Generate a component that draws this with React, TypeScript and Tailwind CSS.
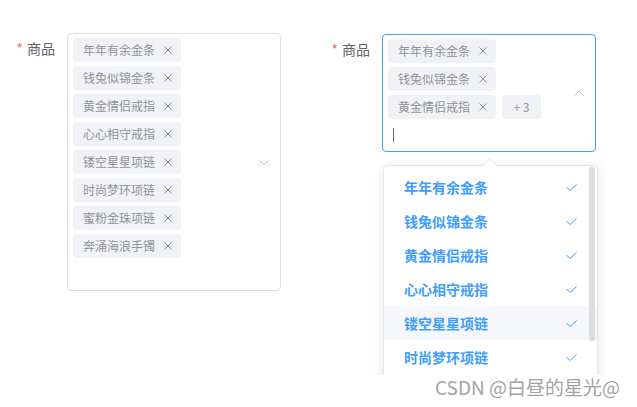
import React from 'react';

const goods = ['年年有余金条', '钱兔似锦金条', '黄金情侣戒指', '心心相守戒指', '镂空星星项链', '时尚梦环项链', '蜜粉金珠项链', '奔涌海浪手镯'];

function CloseIcon() {
  return (
    <svg className="ml-[9px] shrink-0" width="8" height="8" viewBox="0 0 8 8">
      <path d="M0.5 0.5L7.5 7.5M7.5 0.5L0.5 7.5" stroke="#909399" strokeWidth="1" fill="none" />
    </svg>
  );
}

function Tag({ label }: { label: string }) {
  return (
    <span className="flex h-[24px] items-center rounded-[4px] bg-[#f0f2f5] pl-[10px] pr-[9px] text-[12px] leading-none text-[#909399]">
      {label}
      <CloseIcon />
    </span>
  );
}

function Chevron({ up }: { up?: boolean }) {
  return (
    <svg width="12" height="7" viewBox="0 0 12 7" className={up ? 'rotate-180' : ''}>
      <path d="M1 1L6 6L11 1" stroke="#c0c4cc" strokeWidth="1" fill="none" />
    </svg>
  );
}

function Label() {
  return (
    <div className="w-[67px] shrink-0 pr-[12px] text-right text-[14px] leading-[31px] text-[#606266]">
      <span className="mr-[4px] text-[#f56c6c]">*</span>商品
    </div>
  );
}

function Dropdown() {
  return (
    <div className="absolute left-[-11px] top-[calc(100%+7px)] h-[216px] w-[250px] overflow-hidden pl-[12px]">
      <div className="relative mt-[6px] w-[215px] rounded-[4px] border border-[#e4e7ed] bg-white shadow-[0_2px_12px_0_rgba(0,0,0,0.1)]">
        <svg className="absolute left-[99px] top-[-8px]" width="14" height="8" viewBox="0 0 14 8">
          <path d="M0 8L7 1L14 8" stroke="#e4e7ed" strokeWidth="1" fill="white" />
        </svg>
        <div className="absolute right-[2px] top-px h-[174px] w-[6px] rounded-full bg-[#dcdde0]" />
        <ul className="pb-[6px] pt-[4px]">
          {goods.map((g, i) => (
            <li
              key={g}
              className={`flex h-[34px] items-center justify-between pl-[20px] pr-[20px] text-[14px] font-bold text-[#409eff] ${i === 4 ? 'bg-[#f5f7fa]' : ''}`}
            >
              {g}
              <svg width="11" height="7" viewBox="0 0 11 7">
                <path d="M0.5 3L4 6.5L10.5 0.5" stroke="#409eff" strokeWidth="1" fill="none" />
              </svg>
            </li>
          ))}
        </ul>
      </div>
    </div>
  );
}

export default function App() {
  return (
    <div className="relative h-[407px] w-[637px] overflow-hidden bg-white font-['Noto_Sans_CJK_SC',sans-serif]">
      <div className="flex items-start pt-[33px]">
        <div className="flex items-start">
          <Label />
          <div className="flex h-[258px] w-[214px] rounded-[4px] border border-[#dcdfe6]">
            <div className="flex flex-1 flex-wrap content-start gap-x-[6px] gap-y-[4px] pl-[5px] pt-[4px]">
              {goods.map((g) => (
                <Tag key={g} label={g} />
              ))}
            </div>
            <div className="flex w-[32px] items-center justify-center">
              <Chevron />
            </div>
          </div>
        </div>

        <div className="ml-[34px] mt-px flex items-start">
          <Label />
          <div className="relative">
            <div className="flex h-[118px] w-[214px] rounded-[4px] border border-[#409eff]">
              <div className="flex flex-1 flex-col pl-[5px] pt-[4px]">
                <div className="flex flex-wrap content-start gap-x-[6px] gap-y-[4px]">
                  {goods.slice(0, 3).map((g) => (
                    <Tag key={g} label={g} />
                  ))}
                  <span className="flex h-[24px] w-[39px] items-center justify-center rounded-[4px] bg-[#f0f2f5] text-[12px] leading-none text-[#909399]">
                    + 3
                  </span>
                </div>
                <div className="mt-[4px] flex h-[24px] items-center pl-[5px]">
                  <span className="h-[14px] w-px bg-[#606266]" />
                </div>
              </div>
              <div className="flex w-[32px] items-center justify-center">
                <Chevron up />
              </div>
            </div>
            <Dropdown />
          </div>
        </div>
      </div>

      <div className="absolute left-[435px] top-[375px] text-[19px] leading-[24px] text-[#a3a3a3]">CSDN @白昼的星光@</div>
    </div>
  );
}
